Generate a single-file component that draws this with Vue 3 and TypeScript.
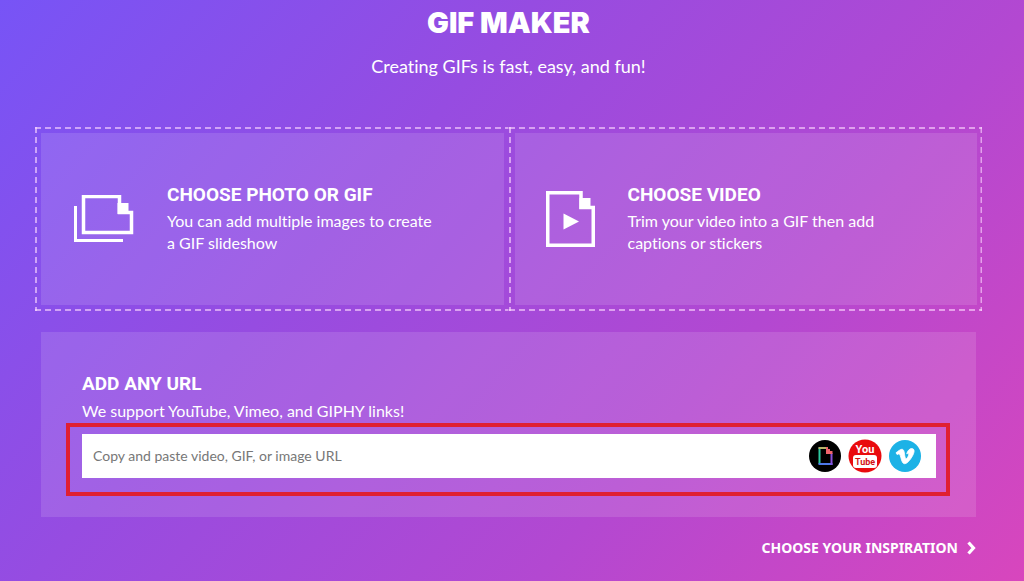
<script setup lang="ts">
import { ref } from 'vue'

interface Choice {
  id: 'photo' | 'video'
  title: string
  lines: string[]
}

const choices: Choice[] = [
  { id: 'photo', title: 'CHOOSE PHOTO OR GIF', lines: ['You can add multiple images to create', 'a GIF slideshow'] },
  { id: 'video', title: 'CHOOSE VIDEO', lines: ['Trim your video into a GIF then add', 'captions or stickers'] },
]

const url = ref('')
</script>

<template>
  <main class="page">
    <header class="intro">
      <h1>GIF MAKER</h1>
      <p>Creating GIFs is fast, easy, and fun!</p>
    </header>

    <section class="choices">
      <div v-for="choice in choices" :key="choice.id" class="zone">
        <svg class="dashes" aria-hidden="true">
          <line x1="0" y1="1" x2="100%" y2="1" />
          <line x1="1" y1="0" x2="1" y2="100%" />
          <line class="bottom" x1="0" y1="100%" x2="100%" y2="100%" />
          <line v-if="choice.id === 'video'" class="right" x1="100%" y1="0" x2="100%" y2="100%" />
        </svg>
        <button type="button" class="card" :class="choice.id">
          <span class="symbol">
            <svg v-if="choice.id === 'photo'" width="60" height="48" viewBox="0 0 60 48" aria-hidden="true">
              <path d="M1.5 11V45.500H49" fill="none" stroke="#fff" stroke-width="3" />
              <path d="M9.500 1.500H45.500V17.500H57.500V37.500H9.500Z" fill="none" stroke="#fff" stroke-width="3.500" />
              <path d="M43.500 8h11v11h-11z" fill="#fff" />
            </svg>
            <svg v-else width="49" height="56" viewBox="0 0 49 56" aria-hidden="true">
              <path d="M1.750 1.750H35V16.500H47.250V54.250H1.750Z" fill="none" stroke="#fff" stroke-width="3.500" />
              <path d="M33.500 7h11v11h-11z" fill="#fff" />
              <path d="M17.500 22.500L33 30.500L17.500 38.500Z" fill="#fff" />
            </svg>
          </span>
          <span class="copy">
            <strong>{{ choice.title }}</strong>
            <span v-for="line in choice.lines" :key="line">{{ line }}</span>
          </span>
        </button>
      </div>
    </section>

    <section class="url-panel">
      <h2><label for="source-url">ADD ANY URL</label></h2>
      <p>We support YouTube, Vimeo, and GIPHY links!</p>
      <div class="highlight">
        <div class="field">
          <input id="source-url" v-model="url" type="url" placeholder="Copy and paste video, GIF, or image URL" />
          <svg width="32" height="32" viewBox="0 0 32 32" role="img" aria-label="GIPHY">
            <circle cx="16" cy="16" r="16" fill="#000" />
            <path d="M10.500 7.500V24" stroke="#2ec9a0" stroke-width="2" />
            <path d="M9.500 24H23.500" stroke="#4d78e8" stroke-width="2" />
            <path d="M22.500 25V13" stroke="#8a50dc" stroke-width="2" />
            <path d="M9.500 8H18" stroke="#b9b56a" stroke-width="2" />
            <path d="M17 7h2v2h2v2h2.500v3H17z" fill="#f0646c" />
          </svg>
          <svg width="34" height="34" viewBox="0 0 34 34" role="img" aria-label="YouTube">
            <circle cx="17" cy="17" r="16.500" fill="#e90b0e" />
            <text class="tube-text" x="17" y="14" text-anchor="middle" fill="#fff">You</text>
            <rect x="5" y="16" width="24" height="13" rx="3" fill="#fff" />
            <text class="tube-text small" x="17" y="26" text-anchor="middle" fill="#d51216">Tube</text>
          </svg>
          <svg width="32" height="32" viewBox="0 0 32 32" role="img" aria-label="Vimeo">
            <circle cx="16" cy="16" r="16" fill="#1cb2e6" />
            <path d="M7 12.800C9 11.200 11.300 9.300 12.800 9.300C15.100 9.200 15.200 12.300 15.700 15.300C16.100 17.500 16.500 18.800 17.100 18.800C17.900 18.800 19.600 16 19.700 14.800C19.900 13.500 18.900 13.400 17.700 13.800C18.700 10.400 20.700 8.400 23 8.600C25.300 8.800 25.600 11.100 24.500 13.700C22.800 17.900 18.700 23.700 15.700 23.700C13 23.700 12.500 19.500 11.300 15.800C10.900 14.500 10.500 13.400 8 14.500Z" fill="#fff" stroke="#fff" stroke-width="0.800" />
          </svg>
        </div>
      </div>
    </section>

    <footer class="more">
      <a href="#inspiration">
        CHOOSE YOUR INSPIRATION
        <svg width="9" height="14" viewBox="0 0 9 14" aria-hidden="true">
          <path d="M1.500 1.500L6.500 7L1.500 12.500" fill="none" stroke="#fff" stroke-width="3.200" />
        </svg>
      </a>
    </footer>
  </main>
</template>

<style>
body {
  margin: 0;
}
</style>

<style scoped>
.page {
  box-sizing: border-box;
  min-height: 100vh;
  padding: 4px 48px 20px 41px;
  color: #fff;
  font-family: Lato, "Open Sans", sans-serif;
  font-size: 16px;
  font-variant-ligatures: none;
  line-height: 22px;
  background: linear-gradient(131deg, #7754f6 0%, #964ce1 35%, #b348d1 68%, #d846bd 100%);
}

h1,
h2,
p {
  margin: 0;
}

.intro {
  text-align: center;
  height: 123px;
}

h1 {
  font-family: Inter, sans-serif;
  font-size: 29px;
  font-weight: 900;
  line-height: 38px;
}

.intro p {
  margin-top: 12px;
  font-size: 18px;
  line-height: 24px;
}

.choices {
  display: grid;
  grid-template-columns: 1fr 1fr;
  margin: 0 -6px;
}

.zone {
  position: relative;
  padding: 6px 5px 6px 6px;
}

.dashes {
  position: absolute;
  inset: 0;
  width: 100%;
  height: 100%;
  pointer-events: none;
}

.dashes line {
  stroke: rgba(255, 220, 255, 0.6);
  stroke-width: 2;
  stroke-dasharray: 6 4;
}

.dashes .bottom {
  transform: translateY(-1px);
}

.dashes .right {
  transform: translateX(-1px);
}

.card {
  display: flex;
  align-items: center;
  width: 100%;
  height: 172px;
  margin: 0;
  padding: 0 0 0 33px;
  border: 0;
  color: inherit;
  font: inherit;
  font-variant-ligatures: none;
  text-align: left;
  background: rgba(255, 255, 255, 0.12);
  cursor: pointer;
}

.card.video {
  padding-left: 31px;
}

.symbol {
  display: flex;
  width: 93px;
}

.video .symbol {
  width: 82px;
}

.copy {
  display: flex;
  flex-direction: column;
  padding-bottom: 4px;
  white-space: nowrap;
}

.copy strong,
h2 {
  font-family: Roboto, "Open Sans", sans-serif;
  font-size: 19px;
  font-weight: 700;
  line-height: 30px;
}

.url-panel {
  margin-top: 21px;
  padding: 37px 26px 21px 41px;
  background: rgba(255, 255, 255, 0.12);
}

.url-panel p {
  line-height: 24px;
}

.highlight {
  margin-left: -16px;
  padding: 7px 10px 14px 12px;
  border: 4px solid #e01f32;
}

.field {
  display: flex;
  align-items: center;
  gap: 7px;
  height: 44px;
  padding: 0 15px 0 11px;
  background: #fff;
}

input {
  flex: 1;
  min-width: 0;
  padding: 0;
  border: 0;
  outline: 0;
  color: #444;
  font: inherit;
  font-size: 14px;
  background: transparent;
}

input::placeholder {
  color: #777;
  opacity: 1;
}

.tube-text {
  font-family: Roboto, "Open Sans", sans-serif;
  font-size: 11px;
  font-weight: 700;
}

.tube-text.small {
  font-size: 9px;
}

.more {
  display: flex;
  justify-content: flex-end;
  margin-top: 20px;
}

.more a {
  display: flex;
  align-items: center;
  gap: 9px;
  color: #fff;
  font-family: "Noto Sans", "Open Sans", sans-serif;
  font-size: 14px;
  font-weight: 700;
  text-decoration: none;
}
</style>
